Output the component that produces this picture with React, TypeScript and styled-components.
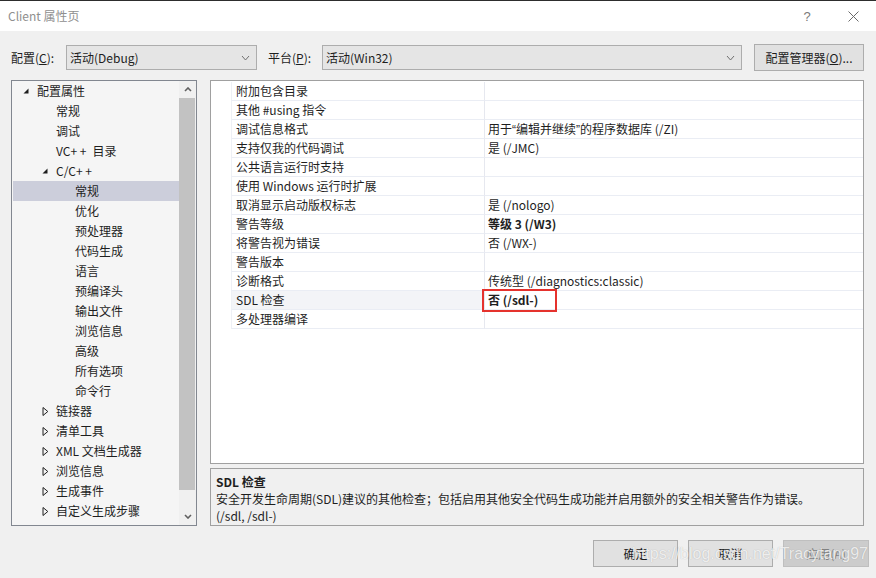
import React from "react";
import styled, { createGlobalStyle } from "styled-components";

const GlobalStyle = createGlobalStyle`
  html, body {
    margin: 0;
    padding: 0;
    width: 876px;
    height: 578px;
    overflow: hidden;
    background: #f0f0f0;
  }
  body {
    font-family: "Noto Sans CJK SC", "Noto Sans", sans-serif;
    font-size: 12px;
    color: #1e1e1e;
  }
  * { box-sizing: border-box; }
`;

const Window = styled.div`
  position: relative;
  width: 876px;
  height: 578px;
  display: flex;
  flex-direction: column;
  background: #f0f0f0;
  border-top: 1px solid #2d2d2d;
`;

const TitleBar = styled.div`
  height: 30px;
  background: #ffffff;
  display: flex;
  align-items: center;
`;

const TitleText = styled.div`
  flex: 1;
  padding-left: 8px;
  color: #8f8f8f;
  font-size: 12px;
  line-height: 30px;
`;

const TitleButton = styled.div`
  width: 46px;
  height: 30px;
  display: flex;
  align-items: center;
  justify-content: center;
  color: #7a7a7a;
  font-family: "Liberation Sans", sans-serif;
  font-size: 13px;
`;

const Toolbar = styled.div`
  display: flex;
  align-items: center;
  height: 40px;
  padding: 13px 12px 0 11px;
`;

const FieldLabel = styled.div<{ $w: number }>`
  width: ${(p) => p.$w}px;
  line-height: 27px;
  white-space: nowrap;
`;

const Combo = styled.div<{ $w: number; $mr: number }>`
  width: ${(p) => p.$w}px;
  margin-right: ${(p) => p.$mr}px;
  height: 25px;
  background: #e5e5e5;
  border: 1px solid #adadad;
  display: flex;
  align-items: center;
  padding: 0 6px 0 3px;
  line-height: 23px;
`;

const ComboText = styled.span`
  flex: 1;
  white-space: nowrap;
`;

const PushButton = styled.div<{ $w: number; $disabled?: boolean }>`
  width: ${(p) => p.$w}px;
  height: 27px;
  display: flex;
  align-items: center;
  justify-content: center;
  background: ${(p) => (p.$disabled ? "#cccccc" : "#e1e1e1")};
  border: 1px solid ${(p) => (p.$disabled ? "#bfbfbf" : "#adadad")};
  color: ${(p) => (p.$disabled ? "#838383" : "#1e1e1e")};
  white-space: nowrap;
`;

const Main = styled.div`
  display: flex;
  gap: 13px;
  height: 446px;
  margin-top: 9px;
  padding: 0 12px 0 11px;
`;

const TreePanel = styled.div`
  width: 186px;
  border: 1px solid #828790;
  background: #f5f5f5;
  display: flex;
`;

const TreeList = styled.div`
  flex: 1;
  padding-left: 1px;
`;

const TreeRow = styled.div<{ $level: number; $selected?: boolean }>`
  height: 20px;
  display: flex;
  align-items: center;
  padding-left: ${(p) => 10 + p.$level * 19}px;
  background: ${(p) => (p.$selected ? "#cccedb" : "transparent")};
  line-height: 20px;
  white-space: pre;
`;

const Expander = styled.span`
  width: 14px;
  height: 20px;
  display: flex;
  align-items: center;
`;

const ScrollBar = styled.div`
  width: 17px;
  display: flex;
  flex-direction: column;
  background: #f0f0f0;
`;

const ScrollArrow = styled.div`
  height: 17px;
  display: flex;
  align-items: center;
  justify-content: center;
`;

const ScrollTrack = styled.div`
  flex: 1;
  display: flex;
  flex-direction: column;
`;

const ScrollThumb = styled.div`
  height: 392px;
  margin: 0 1px 0 0;
  background: #c2c2c2;
`;

const RightColumn = styled.div`
  flex: 1;
  display: flex;
  flex-direction: column;
  gap: 4px;
`;

const Grid = styled.div`
  height: 384px;
  border: 1px solid #a0a0a0;
  background: #ffffff;
  padding-top: 1px;
`;

const GridRow = styled.div`
  display: flex;
  height: 19px;
`;

const Gutter = styled.div`
  width: 20px;
`;

const NameCell = styled.div<{ $selected?: boolean }>`
  width: 254px;
  border-left: 1px solid #eef0f5;
  border-right: 1px solid #e6e8ef;
  border-bottom: 1px solid #eaedf4;
  padding-left: 4px;
  line-height: 18px;
  white-space: nowrap;
  background: ${(p) => (p.$selected ? "#f3f4f7" : "#ffffff")};
`;

const ValueCell = styled.div<{ $bold?: boolean }>`
  position: relative;
  flex: 1;
  border-bottom: 1px solid #eaedf4;
  padding-left: 3px;
  line-height: 18px;
  white-space: nowrap;
  font-weight: ${(p) => (p.$bold ? 700 : 400)};
`;

/* Latin-width curly quotes inside CJK text */
const Quote = styled.span`
  font-family: "Liberation Sans", sans-serif;
`;

const Callout = styled.div`
  position: absolute;
  left: -3px;
  top: -2px;
  width: 75px;
  height: 23px;
  border: 2px solid #e5322d;
  pointer-events: none;
`;

const Description = styled.div`
  flex: 1;
  background: #f0f0f0;
  border: 1px solid #a0a0a0;
  padding: 4px 5px 0;
  line-height: 17px;
`;

const DescTitle = styled.div`
  font-weight: 700;
`;

const Footer = styled.div`
  display: flex;
  justify-content: flex-end;
  gap: 10px;
  margin-top: 14px;
  padding-right: 7px;
`;

const Watermark = styled.div`
  position: absolute;
  left: 632px;
  top: 544px;
  font-family: "Liberation Sans", sans-serif;
  font-size: 16px;
  color: rgba(255, 255, 255, 0.8);
  text-shadow: 0 0 1px rgba(0, 0, 0, 0.25);
  white-space: nowrap;
  pointer-events: none;
`;

const OpenArrow = () => (
  <svg width="6" height="6" viewBox="0 0 6 6">
    <polygon points="5.5,0.5 5.5,5.5 0.5,5.5" fill="#1e1e1e" />
  </svg>
);

const ClosedArrow = () => (
  <svg width="7" height="9" viewBox="0 0 7 9" style={{ marginTop: 1 }}>
    <polygon points="1,0.5 5.8,4.5 1,8.5" fill="none" stroke="#1e1e1e" strokeWidth="1" />
  </svg>
);

const Chevron = ({ up, color, w = 7, h = 4, sw = 1 }: { up?: boolean; color: string; w?: number; h?: number; sw?: number }) => (
  <svg width={w + 2} height={h + 2} viewBox={`0 0 ${w + 2} ${h + 2}`}>
    <polyline
      points={up ? `1,${h + 1} ${w / 2 + 1},1 ${w + 1},${h + 1}` : `1,1 ${w / 2 + 1},${h + 1} ${w + 1},1`}
      fill="none"
      stroke={color}
      strokeWidth={sw}
    />
  </svg>
);

type TreeItem = { label: string; level: number; arrow?: "open" | "closed"; selected?: boolean };

const treeItems: TreeItem[] = [
  { label: "配置属性", level: 0, arrow: "open" },
  { label: "常规", level: 1 },
  { label: "调试", level: 1 },
  { label: "VC+ +\u2002目录", level: 1 },
  { label: "C/C+ +", level: 1, arrow: "open" },
  { label: "常规", level: 2, selected: true },
  { label: "优化", level: 2 },
  { label: "预处理器", level: 2 },
  { label: "代码生成", level: 2 },
  { label: "语言", level: 2 },
  { label: "预编译头", level: 2 },
  { label: "输出文件", level: 2 },
  { label: "浏览信息", level: 2 },
  { label: "高级", level: 2 },
  { label: "所有选项", level: 2 },
  { label: "命令行", level: 2 },
  { label: "链接器", level: 1, arrow: "closed" },
  { label: "清单工具", level: 1, arrow: "closed" },
  { label: "XML 文档生成器", level: 1, arrow: "closed" },
  { label: "浏览信息", level: 1, arrow: "closed" },
  { label: "生成事件", level: 1, arrow: "closed" },
  { label: "自定义生成步骤", level: 1, arrow: "closed" },
];

type Prop = { name: string; value: React.ReactNode; bold?: boolean; selected?: boolean; marked?: boolean };

const properties: Prop[] = [
  { name: "附加包含目录", value: "" },
  { name: "其他 #using 指令", value: "" },
  {
    name: "调试信息格式",
    value: (
      <>
        用于<Quote>“</Quote>编辑并继续<Quote>”</Quote>的程序数据库 (/ZI)
      </>
    ),
  },
  { name: "支持仅我的代码调试", value: "是 (/JMC)" },
  { name: "公共语言运行时支持", value: "" },
  { name: "使用 Windows 运行时扩展", value: "" },
  { name: "取消显示启动版权标志", value: "是 (/nologo)" },
  { name: "警告等级", value: "等级 3 (/W3)", bold: true },
  { name: "将警告视为错误", value: "否 (/WX-)" },
  { name: "警告版本", value: "" },
  { name: "诊断格式", value: "传统型 (/diagnostics:classic)" },
  { name: "SDL 检查", value: "否 (/sdl-)", bold: true, selected: true, marked: true },
  { name: "多处理器编译", value: "" },
];

export default function App() {
  return (
    <>
      <GlobalStyle />
      <Window>
        <TitleBar>
          <TitleText>Client 属性页</TitleText>
          <TitleButton>?</TitleButton>
          <TitleButton>
            <svg width="11" height="11" viewBox="0 0 11 11">
              <line x1="0.5" y1="0.5" x2="10.5" y2="10.5" stroke="#6a6a6a" strokeWidth="1" />
              <line x1="10.5" y1="0.5" x2="0.5" y2="10.5" stroke="#6a6a6a" strokeWidth="1" />
            </svg>
          </TitleButton>
        </TitleBar>

        <Toolbar>
          <FieldLabel $w={55}>
            配置(<u>C</u>):
          </FieldLabel>
          <Combo $w={191} $mr={11}>
            <ComboText>活动(Debug)</ComboText>
            <Chevron color="#707070" />
          </Combo>
          <FieldLabel $w={54}>
            平台(<u>P</u>):
          </FieldLabel>
          <Combo $w={420} $mr={12}>
            <ComboText>活动(Win32)</ComboText>
            <Chevron color="#707070" />
          </Combo>
          <PushButton $w={110}>
            配置管理器(<u>O</u>)...
          </PushButton>
        </Toolbar>

        <Main>
          <TreePanel>
            <TreeList>
              {treeItems.map((item, i) => (
                <TreeRow key={i} $level={item.level} $selected={item.selected}>
                  <Expander>
                    {item.arrow === "open" && <OpenArrow />}
                    {item.arrow === "closed" && <ClosedArrow />}
                  </Expander>
                  {item.label}
                </TreeRow>
              ))}
            </TreeList>
            <ScrollBar>
              <ScrollArrow>
                <Chevron up color="#606060" w={6} h={3} sw={1.6} />
              </ScrollArrow>
              <ScrollTrack>
                <ScrollThumb />
              </ScrollTrack>
              <ScrollArrow>
                <Chevron color="#606060" w={6} h={3} sw={1.6} />
              </ScrollArrow>
            </ScrollBar>
          </TreePanel>

          <RightColumn>
            <Grid>
              {properties.map((p, i) => (
                <GridRow key={i}>
                  <Gutter />
                  <NameCell $selected={p.selected}>{p.name}</NameCell>
                  <ValueCell $bold={p.bold}>
                    {p.value}
                    {p.marked && <Callout />}
                  </ValueCell>
                </GridRow>
              ))}
            </Grid>
            <Description>
              <DescTitle>SDL 检查</DescTitle>
              <div>安全开发生命周期(SDL)建议的其他检查；包括启用其他安全代码生成功能并启用额外的安全相关警告作为错误。</div>
              <div>(/sdl, /sdl-)</div>
            </Description>
          </RightColumn>
        </Main>

        <Footer>
          <PushButton $w={85}>确定</PushButton>
          <PushButton $w={85}>取消</PushButton>
          <PushButton $w={86} $disabled>
            应用(A)
          </PushButton>
        </Footer>

        <Watermark>https://blog.csdn.net/Tracytang97</Watermark>
      </Window>
    </>
  );
}
